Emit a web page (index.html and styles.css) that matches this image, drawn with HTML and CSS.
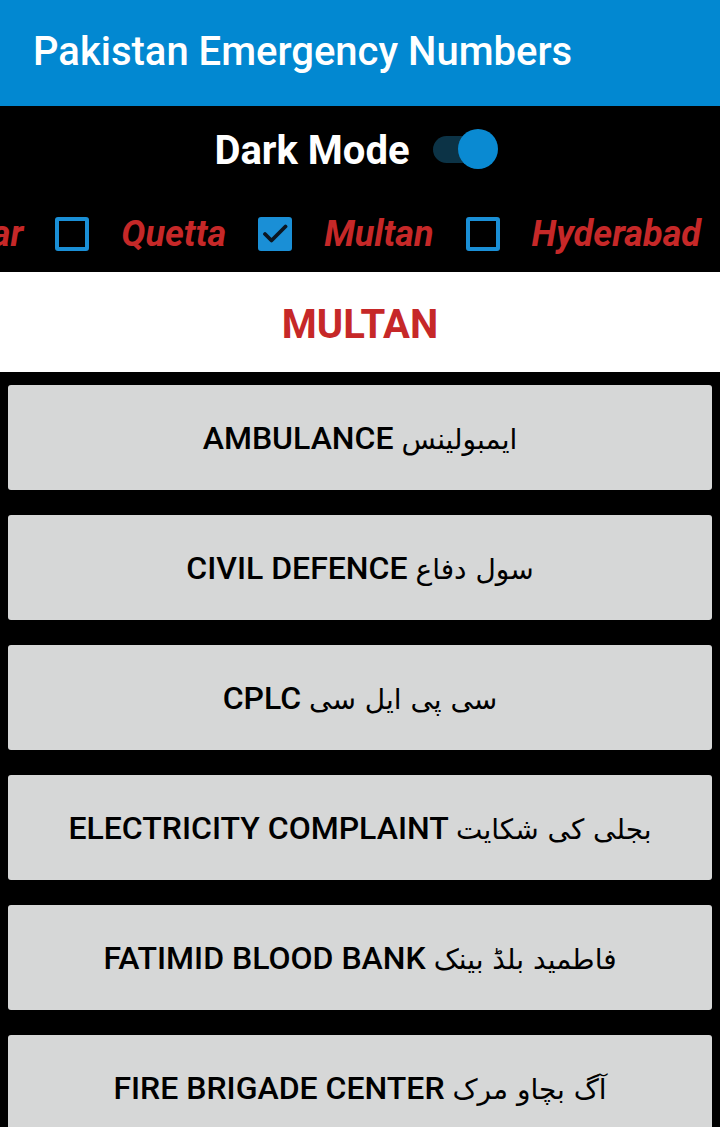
FILE: index.html
```html
<!DOCTYPE html>
<html lang="en">
<head>
<meta charset="utf-8">
<title>Pakistan Emergency Numbers</title>
<link rel="stylesheet" href="styles.css">
</head>
<body>
<header class="appbar">
  <h1 class="appbar-title">Pakistan Emergency Numbers</h1>
</header>
<section class="controls">
  <div class="dark-row">
    <span class="dark-label">Dark Mode</span>
    <span class="switch"><span class="switch-track"></span><span class="switch-thumb"></span></span>
  </div>
  <div class="city-scroll">
    <div class="city-list">
      <label class="city"><span class="box"></span><span class="city-name">Karachi</span></label>
      <label class="city"><span class="box"></span><span class="city-name">Lahore</span></label>
      <label class="city"><span class="box"></span><span class="city-name">Peshawar</span></label>
      <label class="city"><span class="box"></span><span class="city-name">Quetta</span></label>
      <label class="city"><span class="box checked"><svg viewBox="4 4 26 26" width="26" height="26"><path d="M7 17l6.5 6.5L27.5 9.5" fill="none" stroke="#0b1622" stroke-width="3.8" stroke-linecap="round" stroke-linejoin="round"/></svg></span><span class="city-name">Multan</span></label>
      <label class="city"><span class="box"></span><span class="city-name">Hyderabad</span></label>
    </div>
  </div>
</section>
<section class="city-banner">
  <h2 class="city-title">MULTAN</h2>
</section>
<main class="numbers">
  <button class="num-btn">AMBULANCE <span class="ur" lang="ur">ایمبولینس</span></button>
  <button class="num-btn">CIVIL DEFENCE <span class="ur" lang="ur">سول دفاع</span></button>
  <button class="num-btn">CPLC <span class="ur" lang="ur">سی پی ایل سی</span></button>
  <button class="num-btn">ELECTRICITY COMPLAINT <span class="ur" lang="ur">بجلی کی شکایت</span></button>
  <button class="num-btn">FATIMID BLOOD BANK <span class="ur" lang="ur">فاطمید بلڈ بینک</span></button>
  <button class="num-btn">FIRE BRIGADE CENTER <span class="ur" lang="ur">آگ بچاو مرک</span></button>
</main>
</body>
</html>
```
FILE: styles.css
```css
* { box-sizing: border-box; }
html, body { margin: 0; padding: 0; }
body {
  background: #000;
  font-family: Roboto, "DejaVu Sans", sans-serif;
  width: 720px;
  height: 1127px;
  overflow: hidden;
}
.appbar {
  background: #0288d1;
  height: 106px;
  display: flex;
  align-items: center;
  padding-left: 33px;
}
.appbar-title {
  margin: 0;
  color: #fff;
  font-size: 40px;
  font-weight: 500;
  padding-bottom: 4px;
}
.controls {
  background: #000;
  height: 166px;
  display: flex;
  flex-direction: column;
}
.dark-row {
  height: 88px;
  display: flex;
  align-items: center;
  justify-content: center;
  gap: 23px;
  padding-right: 8px;
}
.dark-label {
  color: #fff;
  font-size: 40px;
  font-weight: 700;
}
.switch {
  position: relative;
  width: 65px;
  height: 40px;
  display: inline-block;
  margin-top: -3px;
}
.switch-track {
  position: absolute;
  left: 0;
  top: 7px;
  width: 52px;
  height: 27px;
  border-radius: 14px;
  background: #0c3346;
}
.switch-thumb {
  position: absolute;
  right: 0;
  top: 0;
  width: 40px;
  height: 40px;
  border-radius: 50%;
  background: #0a8ad2;
}
.city-scroll {
  overflow: hidden;
  height: 78px;
  display: flex;
  justify-content: flex-end;
  padding-right: 19px;
}
.city-list {
  display: flex;
  align-items: center;
  gap: 32px;
  flex-shrink: 0;
  padding-top: 1px;
}
.city {
  display: flex;
  align-items: center;
  gap: 32px;
}
.box {
  width: 34px;
  height: 34px;
  border: 4px solid #1a8fd6;
  border-radius: 3px;
  display: flex;
  align-items: center;
  justify-content: center;
}
.box.checked {
  background: #1a8fd6;
}
.city-name {
  color: #c62828;
  font-size: 36px;
  font-weight: 700;
  font-style: italic;
}
.city-banner {
  background: #fff;
  height: 100px;
  display: flex;
  align-items: center;
  justify-content: center;
}
.city-title {
  margin: 0;
  color: #c62828;
  font-size: 40px;
  font-weight: 700;
  padding-top: 4px;
}
.numbers {
  display: flex;
  flex-direction: column;
  gap: 25px;
  padding: 13px 8px 0;
}
.num-btn {
  height: 105px;
  flex-shrink: 0;
  border: none;
  border-radius: 3px;
  background: #d6d7d7;
  color: #000;
  font-family: Roboto, "DejaVu Sans", sans-serif;
  font-size: 32px;
  font-weight: 500;
  text-align: center;
}
.ur {
  font-family: "DejaVu Sans", sans-serif;
  font-size: 28px;
  font-weight: 400;
}
```
